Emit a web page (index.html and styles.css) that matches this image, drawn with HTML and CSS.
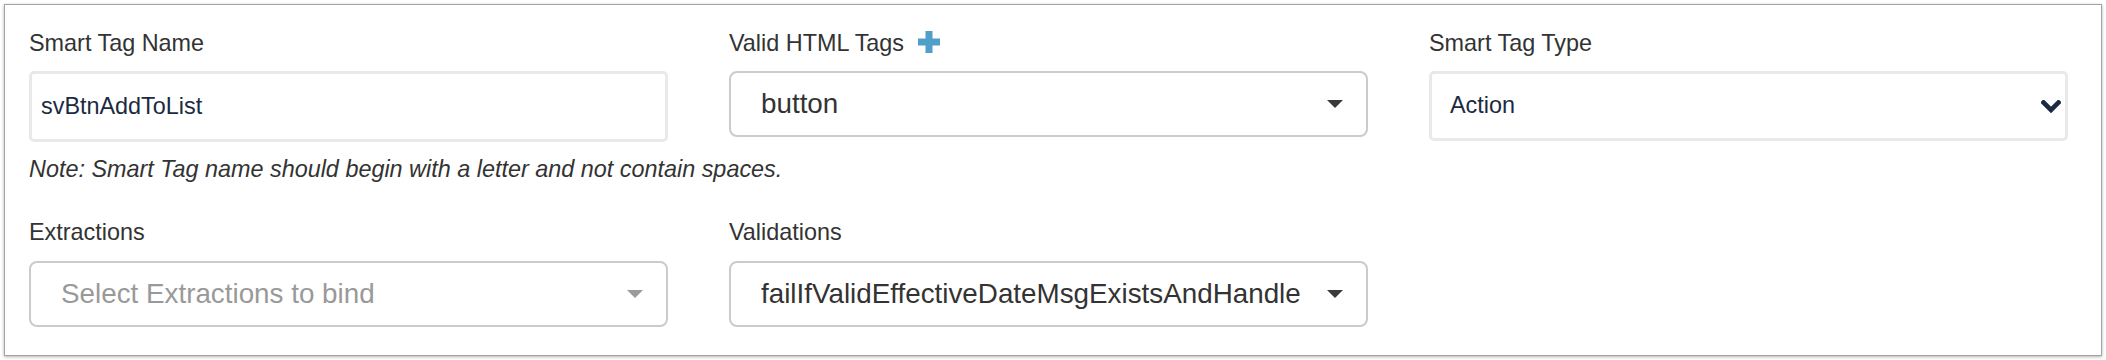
FILE: index.html
```html
<!DOCTYPE html>
<html>
<head>
<meta charset="utf-8">
<link rel="stylesheet" href="styles.css">
</head>
<body>
<div class="panel">
  <div class="row">
    <div class="field">
      <div class="label">Smart Tag Name</div>
      <div class="control input"><span class="val">svBtnAddToList</span></div>
    </div>
    <div class="field">
      <div class="label">Valid HTML Tags
        <svg class="plus" width="22" height="22" viewBox="0 0 22 22"><rect x="7.5" y="0" width="7" height="22" fill="#4f9fc9"/><rect x="0" y="7.5" width="22" height="7" fill="#4f9fc9"/></svg>
      </div>
      <div class="control s2"><span class="s2val">button</span>
        <svg class="tri" width="16" height="8" viewBox="0 0 16 8"><path d="M0 0H16L8 8Z" fill="#3a3a3a"/></svg>
      </div>
    </div>
    <div class="field">
      <div class="label">Smart Tag Type</div>
      <div class="control sel"><span class="val">Action</span>
        <svg class="chev" width="20" height="13" viewBox="0 0 20 13"><path d="M2.5 2.5L10 10L17.5 2.5" fill="none" stroke="#1b2a42" stroke-width="4.6" stroke-linecap="square"/></svg>
      </div>
    </div>
  </div>
  <div class="note">Note: Smart Tag name should begin with a letter and not contain spaces.</div>
  <div class="row row2">
    <div class="field">
      <div class="label">Extractions</div>
      <div class="control s2 r2"><span class="s2val ph">Select Extractions to bind</span>
        <svg class="tri" width="16" height="8" viewBox="0 0 16 8"><path d="M0 0H16L8 8Z" fill="#9a9a9a"/></svg>
      </div>
    </div>
    <div class="field">
      <div class="label">Validations</div>
      <div class="control s2 r2"><span class="s2val">failIfValidEffectiveDateMsgExistsAndHandle</span>
        <svg class="tri" width="16" height="8" viewBox="0 0 16 8"><path d="M0 0H16L8 8Z" fill="#3a3a3a"/></svg>
      </div>
    </div>
    <div class="field"></div>
  </div>
</div>
</body>
</html>
```
FILE: styles.css
```css
html, body {
  margin: 0;
  padding: 0;
  background: #ffffff;
}
body {
  font-family: "Liberation Sans", Helvetica, Arial, sans-serif;
  font-size: 23.4px;
  color: #333333;
}
.panel {
  margin: 4px;
  height: 352px;
  box-sizing: border-box;
  border: 1px solid #a3a3a3;
  box-shadow: 0 1px 3px rgba(0, 0, 0, 0.3);
  padding: 21.5px 33px 0 24px;
}
.row {
  display: grid;
  grid-template-columns: 639px 639px 639px;
  column-gap: 61px;
  align-items: start;
}
.label {
  line-height: 33.4px;
  height: 33.4px;
  margin-bottom: 11px;
  display: flex;
  align-items: center;
  white-space: nowrap;
}
.plus {
  margin-left: 14px;
  margin-top: -2px;
}
.control {
  box-sizing: border-box;
  display: flex;
  align-items: center;
  background: #fff;
  position: relative;
}
.input {
  height: 71px;
  border: 3px solid #e9e9e9;
  border-radius: 5px;
  padding-left: 9px;
}
.sel {
  height: 70px;
  margin-top: 0.7px;
  border: 3px solid #e9e9e9;
  border-radius: 5px;
  padding-left: 18px;
  padding-right: 4px;
  justify-content: space-between;
}
.val {
  color: #1b2a42;
  font-size: 23.4px;
}
.s2 {
  height: 66.6px;
  margin-top: 0.7px;
  border: 2px solid #cbcbcb;
  border-radius: 8px;
  padding-left: 30px;
  padding-right: 23px;
  justify-content: space-between;
}
.s2val {
  font-size: 27.8px;
  color: #333333;
  white-space: nowrap;
}
.ph {
  color: #999999;
}
.tri {
  flex: none;
}
.chev {
  flex: none;
  margin-top: 2px;
}
.note {
  margin-top: 11px;
  line-height: 33.4px;
  font-style: italic;
  color: #333333;
  white-space: nowrap;
}
.row2 {
  margin-top: 30px;
}
.r2 {
  margin-top: 0;
  height: 66px;
}
```
